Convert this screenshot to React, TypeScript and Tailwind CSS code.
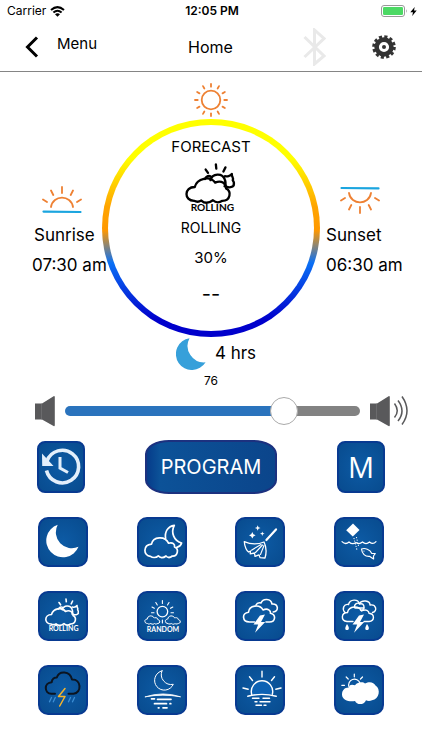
import { useState } from "react";
import type { ReactNode } from "react";

const CLOUD = "M13 33 C6 33 6 23.5 13.5 23.5 C15 17.5 24 15.5 27.5 20.5 C32 18.5 35.5 21.5 35 24.5 C39 26.5 38 33 32.5 33 C30 34.6 27.5 34 26 32.6 C23 34.8 20 34.6 18 32.8 C16.5 33.8 14.5 33.8 13 33 Z";
const BOLT = "M25 24.5 L18.5 33.5 H23.2 L20 41.8 L30.2 31 H26 L30 23.5 Z";

function RollingArt() {
  return (
    <g fill="none" stroke="currentColor" strokeWidth="1.6" strokeLinecap="round" strokeLinejoin="round">
      <path d="M21 11.5 L22.6 13.8 M28 8 L28.3 10.8 M34.6 10 L33.2 12.8" />
      <path d="M24.3 18.8 C25.5 14 32.5 13.5 34.2 18.5 C35 20.5 34.6 22 34 23" />
      <path d="M20.5 18 C21.5 16.2 23 15.5 24.8 16.4" />
      <path d="M34.3 16 C35.6 16.4 38 16 39 14.5 C38.6 16.6 40.5 17 39.6 18.8 C41.5 21 39.5 23.2 40.3 22.4 C39.5 23.8 37 24 35.5 23.4" />
      <path d={CLOUD} />
      <text x="25.6" y="39.8" textAnchor="middle" fontSize="7" fontWeight="700" fill="currentColor" stroke="none" fontFamily="Lato, sans-serif">ROLLING</text>
    </g>
  );
}

const moon = <path fill="white" d="M19.7 7.8 A16.7 16.7 0 1 0 40.5 29.8 A16 16 0 0 1 19.7 7.8 Z" />;

const cloudMoon = (
  <g fill="none" stroke="white" strokeWidth="1.7" strokeLinejoin="round" strokeLinecap="round">
    <path d="M13.5 39.3 C6 38.5 5.8 28 14.5 27.2 C16 19.5 28 18.5 31.5 26.2 C36 24.8 38 27.5 37.5 30 C42.5 32 40.5 39.5 35.3 39 C33 41 30.5 40.6 29 39 C26 41.5 23 41 21.3 38.8 C19 41 15.5 41 13.5 39.3 Z" />
    <path d="M28.6 21.5 C27.5 14.5 31 9.3 37.3 8.3 C33.5 15.5 37 24 44.6 26 C44 28.2 42.2 29.8 39.8 30.3" />
  </g>
);

const broom = (
  <g fill="none" stroke="white" strokeLinecap="round" strokeLinejoin="round">
    <path strokeWidth="2.2" d="M41 12.4 L31.4 23" />
    <path strokeWidth="1.3" d="M29 25 C23 27.5 15 27.2 9.3 24.6 C9.5 30 12 34 13.5 35 L15.5 34 L15.2 36.8 L19.5 36 L20 39.4 L24 37.8 L25 40.6 L30 41 C31.5 36 31.5 30 29 25 Z" />
    <path strokeWidth="1.1" d="M26 27.5 L16.5 33.2 M27.5 28 L20.5 35.5 M29 28.5 L25.5 37.5" />
    <path fill="white" stroke="none" d="M22.7 8.2 L23.5 10.2 L25.5 11 L23.5 11.8 L22.7 13.8 L21.9 11.8 L19.9 11 L21.9 10.2 Z M17.3 15 L18.4 17.2 L20.6 18.3 L18.4 19.4 L17.3 21.6 L16.2 19.4 L14 18.3 L16.2 17.2 Z M27.3 14.4 L27.9 16.1 L29.6 16.7 L27.9 17.3 L27.3 19 L26.7 17.3 L25 16.7 L26.7 16.1 Z" />
  </g>
);

const feeding = (
  <g fill="none" stroke="white" strokeWidth="1.2" strokeLinecap="round" strokeLinejoin="round">
    <path fill="white" stroke="none" d="M19 6.4 L25.5 13 L18.8 19.6 L12.2 13.2 Z" />
    <path d="M8 24.6 Q11.5 28.2 15 25 Q18.5 28.2 22 25.5 Q25 28 28.5 25 Q32 28.2 35.5 25 Q39 28 42 24.6" />
    <path strokeDasharray="0.1 2.6" d="M20 21.5 L23 33 M22.5 20.5 L25 31" />
    <path d="M27.5 32 C31 30.6 36 32.5 37.8 36.4 L41.3 36.5 L39.5 39 L39.6 42 L35.8 39.4 C31 40 28 36.5 27.5 32 Z M30 34 V34.1" />
  </g>
);

const thunder = (
  <g fill="none" stroke="white" strokeWidth="1.6" strokeLinecap="round" strokeLinejoin="round">
    <path d="M19.5 31 H14.5 C7 31 6.5 22 13.5 21.3 C14 14 25 12.8 28 19 C33 16.5 36 20 35.4 22.2 C41.5 23.5 40.5 31 34.5 31 H31" />
    <path d="M21 14 C22 11.8 24 11.5 26 12 C28 7 36 7.5 37 13 C43.5 12.5 44.3 20.5 38.2 21" />
    <path fill="white" stroke="none" d={BOLT} />
  </g>
);

const storm = (
  <g fill="none" stroke="white" strokeWidth="1.4" strokeLinecap="round" strokeLinejoin="round">
    <path d="M19 30.5 H13 C6.5 30 7 21.5 13.5 21.5 C15 14.5 25 14.5 27.5 20 C32 17.5 35 20 35 22.3 C41 23 40.8 30 35 30.5 H30" />
    <path d="M11 21.5 C7.5 18 10 12.5 14.5 13.5 C16 8 24 7.5 25.5 13 C28 12 30 13.5 30 16 C30 19 28 19.5 26.5 19" />
    <path d="M20.5 16.5 C20 13 23 11.5 25.5 12.5 C28 8.5 36 9.5 36 14 C42 13 44 20 38.5 21.5 M21 17 H30" />
    <path fill="white" stroke="none" d={BOLT} />
    <path fill="white" stroke="none" d="M13 33 C16 37 15 39 13 39 C11 39 10.5 37 13 33 Z M33 33 C36 37 35 39 33 39 C31 39 30.5 37 33 33 Z" />
  </g>
);

const smallCloud = "M10.5 32.5 C7 32.5 7 28 10.3 28 C10.5 24.5 15.5 23.7 17.2 27 C19.5 26 20.8 27.4 20.8 28.6 C23.5 29 23.5 32.5 20.8 32.5 Q19 33.6 17.5 32.5 Q15.5 34 13.8 32.5 Q12 33.6 10.5 32.5 Z";

const randomArt = (
  <g fill="none" stroke="white" strokeLinecap="round" strokeLinejoin="round">
    <circle cx="25.4" cy="20.6" r="5.3" strokeWidth="1.3" />
    <path strokeWidth="1.1" d="M25.4 9.5 V12.5 M25.4 29 V32 M18.8 11.5 L20.3 14 M32 11.5 L30.5 14 M15 16 L17.3 17.3 M35.8 16 L33.5 17.3 M14.5 21.8 H17 M34 21.8 H36.5" />
    <path strokeWidth="1" strokeDasharray="1.8 0.7" d={smallCloud} />
    <path strokeWidth="1" strokeDasharray="1.8 0.7" transform="translate(20.5 0)" d={smallCloud} />
    <text x="26" y="41.4" textAnchor="middle" fontSize="7" fontWeight="700" fill="white" stroke="none" fontFamily="Lato, sans-serif">RANDOM</text>
  </g>
);

const rain = (
  <g fill="none" strokeLinecap="round" strokeLinejoin="round">
    <path stroke="#0b1420" strokeWidth="2" d="M17 28.8 H13.5 C6 28.8 5.7 17.5 13.7 17.2 C14 14 16.5 12.4 18.8 12.5 C21 5.5 32 5.5 34 14.5 C43.5 14 44 28 35.5 28.8 H30.5" />
    <path stroke="#3d8ed4" strokeWidth="1.3" d="M13.5 32.5 L11.5 36.8 M17.3 32.5 L15.3 36.8 M32.5 32.5 L30.5 36.8 M36.5 32.5 L34.5 36.8" />
    <path stroke="#f5b52c" strokeWidth="1.5" d="M27 23.5 L20.5 31.5 H27 L21.7 41" />
  </g>
);

const moonrise = (
  <g fill="none" stroke="white" strokeLinecap="round" strokeLinejoin="round">
    <path strokeWidth="1" d="M25 5.8 A9.8 9.8 0 1 0 36.3 19.3 A10 10 0 0 1 25 5.8 Z" />
    <path fill="white" strokeWidth="0.8" d="M8.3 31.8 Q26 26 43.6 31.8 Q26 28.6 8.3 31.8 Z" />
    <path strokeWidth="1.7" d="M14.5 33.8 H17.5 M20.5 34.3 H34 M17.5 38.7 H29.5 M33 38.7 H33.8 M21.3 42.8 H22 M26 42.8 H30" />
  </g>
);

const sunrise = (
  <g fill="none" stroke="white" strokeLinecap="round" strokeLinejoin="round" strokeWidth="1.4">
    <path fill="#0d62b4" stroke="none" d="M16.5 29 A10.7 10.7 0 1 1 37.5 29 Z" />
    <path d="M16.6 29 A10.7 10.7 0 1 1 37.4 29 M12.8 31.2 Q27 27.5 41.2 31.2" />
    <path d="M27 6.3 V12 M14.5 11.8 L17.5 15.5 M39.5 11.8 L36.5 15.5 M8 23 L13.2 24.2 M46 23 L40.8 24.2 M17.5 33.3 H24 M28 33.3 H34.5 M20 36.8 H22 M25 36.8 H35 M21 40.2 H26.5 M29 40.2 H31" />
  </g>
);

const partlyCloudy = (
  <g fill="none" stroke="white" strokeLinecap="round" strokeWidth="1.2">
    <path d="M15 22 A5.8 5.8 0 1 1 26 18" />
    <path d="M20.3 9 V11.8 M12.2 12 L14.2 14 M28.5 12 L26.5 14 M7.8 20.3 H10.5" />
    <path fill="white" stroke="none" d="M15 22.5 C15.5 19 18.5 19.5 21 20.3 C24 16.5 29.5 16.8 31 18.6 C36 16 40 17.8 41.5 20.5 C47 24 45.5 34 38 35.3 C35.5 36.3 33.5 36 32 35.2 C30 40.5 22.5 40 21 36 C16 37.2 8 35.5 8 29.5 C8 25 11 22.2 15 22.5 Z" />
  </g>
);

const effects: { name: string; art: ReactNode }[] = [
  { name: "Moonlight", art: moon },
  { name: "Cloudy night", art: cloudMoon },
  { name: "Cleaning", art: broom },
  { name: "Feeding", art: feeding },
  { name: "Rolling clouds", art: <RollingArt /> },
  { name: "Random clouds", art: randomArt },
  { name: "Thunder", art: thunder },
  { name: "Storm", art: storm },
  { name: "Rain", art: rain },
  { name: "Moonrise", art: moonrise },
  { name: "Sunrise effect", art: sunrise },
  { name: "Partly cloudy", art: partlyCloudy },
];

function StatusBar() {
  return (
    <div className="grid h-[22px] grid-cols-[1fr_auto_1fr] items-center pl-[7px] pr-[5px] text-xs">
      <div className="flex items-center gap-1">
        <span>Carrier</span>
        <svg className="h-[11px] w-[15px]" viewBox="0 0 15 11" fill="none" stroke="black" strokeWidth="2">
          <path d="M1 4 Q7.5 -1.8 14 4 M3.4 6.6 Q7.5 3 11.6 6.6" />
          <path d="M5 8.2 Q7.5 6.3 10 8.2 L7.5 10.8 Z" fill="black" stroke="none" />
        </svg>
      </div>
      <span className="font-semibold">12:05 PM</span>
      <div className="flex items-center justify-end gap-[2px]">
        <svg className="h-3 w-[27px]" viewBox="0 0 27 12">
          <rect x="0.5" y="0.5" width="23" height="11" rx="2.5" fill="none" stroke="#999" />
          <rect x="2" y="2" width="20" height="8" rx="1.2" fill="#4cd964" />
          <path d="M25 4 Q26.6 6 25 8 Z" fill="#999" />
        </svg>
        <svg className="h-[9px] w-[7px]" viewBox="0 0 7 9"><path d="M4.7 0 L0.3 5.2 H3 L2.2 9 L6.7 3.6 H4 Z" /></svg>
      </div>
    </div>
  );
}

function Header() {
  return (
    <header className="grid h-[50px] grid-cols-[1fr_auto_1fr] items-center border-b border-[#858585] pl-[25px] pr-[26px]">
      <button className="flex items-center gap-[18px] text-[15px]">
        <svg className="h-[22px] w-[14px]" viewBox="0 0 14 22" fill="none" stroke="black" strokeWidth="3"><path d="M12 1.5 L2.5 11 L12 20.5" /></svg>
        <span className="pb-1">Menu</span>
      </button>
      <h1 className="text-base">Home</h1>
      <div className="flex items-center justify-end gap-[46px]">
        <button aria-label="Bluetooth">
          <svg className="block h-[38px] w-[23px]" viewBox="0 0 23 38" fill="none" stroke="#e9e9e9" strokeWidth="3" strokeLinejoin="miter">
            <path d="M1.5 9 L21 28 L11.5 36 V2 L21 10.5 L1.5 29" />
          </svg>
        </button>
        <button aria-label="Settings">
          <svg className="block size-6" viewBox="-12 -12 24 24" fill="none" stroke="#333">
            <circle r="7.4" strokeWidth="4.6" />
            <circle r="10.3" strokeWidth="3" strokeDasharray="3.1 2.293" />
            <circle r="2" fill="#333" stroke="none" />
          </svg>
        </button>
      </div>
    </header>
  );
}

function HorizonSun({ setting = false }: { setting?: boolean }) {
  return (
    <svg className="block h-7 w-10" viewBox="0 0 40 28" fill="none" strokeWidth="1.8" strokeLinecap="round">
      <g transform={setting ? "translate(0 28) scale(1 -1)" : undefined}>
        <path stroke="#ee8133" d="M9 21 C11 8.5 29 8.5 31 21 M20 1 V7 M9 4.5 L11.3 9 M31 4.5 L28.7 9 M1 13.5 L5 16 M39 13.5 L35 16" />
      </g>
      <path stroke="#1ba5df" strokeWidth="2.2" d={setting ? "M1.5 2 L38.5 2.4" : "M1.5 25.6 L38.5 26"} />
    </svg>
  );
}

function Speaker({ waves = false }: { waves?: boolean }) {
  return (
    <svg className={waves ? "h-8 w-[39px] shrink-0" : "h-8 w-5 shrink-0"} viewBox={waves ? "0 0 39 32" : "0 0 20 32"}>
      <path fill="#59595b" d="M0 8.5 H7 L19 1 Q19.8 1 19.8 2 V30 Q19.8 31.3 19 31.3 L7 24.5 H0 Z" />
      <path stroke="#77777a" strokeWidth="0.6" d="M6.5 8.5 V24.5" />
      {waves && <path fill="none" stroke="#59595b" strokeWidth="1.5" d="M24.5 8.5 Q30 16 24.5 22.5 M28 5.5 Q36 16 28 26 M32 1.5 Q42 16 32 29.5" />}
    </svg>
  );
}

const tile =
  "flex items-center justify-center border-2 border-[#083a91] bg-radial from-[#0d5ba5] to-[#084b8e] text-white";

export default function App() {
  const [level, setLevel] = useState(76);
  const max = 99;
  const fill = (level / max) * 100;

  return (
    <div className="bg-white font-[Inter,sans-serif] text-black">
      <StatusBar />
      <Header />
      <main className="flex flex-col pt-[11px]">
        <svg className="h-[34px] w-[34px] self-center" viewBox="-17 -17 34 34" fill="none" stroke="#ee8133" strokeWidth="1.8" strokeLinecap="round">
          <circle r="9.3" />
          {[0, 30, 60, 90, 120, 150, 180, 210, 240, 270, 300, 330].map((a) => (
            <path key={a} transform={`rotate(${a})`} d="M0 -13.3 V-16" />
          ))}
        </svg>

        <section className="mt-[2px] grid grid-cols-[minmax(0,1fr)_auto_minmax(0,1fr)]">
          <div className="flex flex-col whitespace-nowrap pl-8 pt-[67px] text-[17px] leading-[30px]">
            <div className="pl-[10px]"><HorizonSun /></div>
            <span className="pl-[2px] pt-[6px]">Sunrise</span>
            <span>07:30 am</span>
          </div>
          <div className="size-[218px] rounded-full bg-linear-[180deg,#ffff00_0%,#ffff00_18%,#ffa500_40%,#ff9800_51%,#0a70f5_66%,#0000cc_92%] p-[6px]">
            <div className="flex size-full flex-col items-center rounded-full bg-white pt-[10px] text-[15px] leading-6">
              <span>FORECAST</span>
              <svg className="mt-1 h-12 w-[53px] shrink-0 overflow-visible" viewBox="7 7 36 33" role="img" aria-label="Rolling"><RollingArt /></svg>
              <span className="mt-[5px] text-sm leading-6">ROLLING</span>
              <span className="mt-[6px]">30%</span>
              <span className="mt-[10px] text-xl">--</span>
            </div>
          </div>
          <div className="flex flex-col whitespace-nowrap pl-[6px] pt-[67px] text-[17px] leading-[30px]">
            <div className="pl-[14px]"><HorizonSun setting /></div>
            <span className="pt-[6px]">Sunset</span>
            <span>06:30 am</span>
          </div>
        </section>

        <div className="flex h-[34px] items-center justify-center gap-[7px] pl-[10px] text-[17px]">
          <svg className="size-8" viewBox="0 0 32 32" fill="#36a0da"><path d="M13.5 0.2 A16 16 0 1 0 29.6 24.3 A16.5 16.5 0 0 1 13.5 0.2 Z" /></svg>
          <span>4 hrs</span>
        </div>

        <output htmlFor="level" className="text-center text-xs leading-5">{level}</output>
        <div className="mt-1 flex items-center gap-[10px] pl-[35px] pr-[13px]">
          <Speaker />
          <input
            id="level"
            type="range"
            aria-label="Level"
            min={0}
            max={max}
            value={level}
            onChange={(e) => setLevel(Number(e.target.value))}
            style={{ backgroundImage: `linear-gradient(to right, #2a73bd ${fill}%, #828282 ${fill}%)` }}
            className="h-[10px] min-w-0 flex-1 appearance-none rounded-full [&::-webkit-slider-thumb]:size-7 [&::-webkit-slider-thumb]:appearance-none [&::-webkit-slider-thumb]:rounded-full [&::-webkit-slider-thumb]:border [&::-webkit-slider-thumb]:border-[#aaa] [&::-webkit-slider-thumb]:bg-white"
          />
          <Speaker waves />
        </div>

        <div className="mt-[13px] flex items-center justify-between px-[37px]">
          <button aria-label="History" className={`${tile} h-[52px] w-12 rounded-lg`}>
            <svg className="h-12 w-11 shrink-0" viewBox="0 0 44 48" fill="none" stroke="#e3effb" strokeWidth="3.6">
              <path d="M8 18 A16.3 16.3 0 1 1 7.5 27.5" />
              <path d="M21 14 V25 L29 29.5" strokeWidth="3" />
              <path d="M3 10.5 L3.2 23 H14.5 Z" fill="#e3effb" stroke="none" />
            </svg>
          </button>
          <button className="h-[54px] w-[132px] border-2 border-[#1c317f] bg-linear-to-r from-[#073b8a] via-[#0c5298] via-10% to-[#0b458b] text-xl text-white [border-radius:24px/14px]">PROGRAM</button>
          <button className={`${tile} h-[52px] w-12 rounded-lg font-[Open_Sans,sans-serif] text-[29px]`}>M</button>
        </div>

        <div className="mt-[23px] grid grid-cols-[repeat(4,50px)] justify-between gap-y-6 px-[38px] pb-[35px]">
          {effects.map(({ name, art }) => (
            <button key={name} aria-label={name} className={`${tile} size-[50px] rounded-[10px]`}>
              <svg className="size-[50px] shrink-0" viewBox="0 0 50 50">{art}</svg>
            </button>
          ))}
        </div>
      </main>
    </div>
  );
}
